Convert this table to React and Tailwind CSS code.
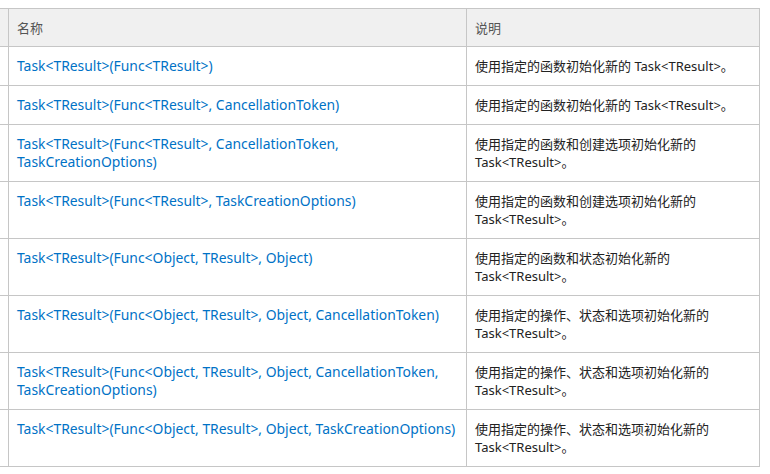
import React from "react";

const rows = [
  [["Task<TResult>(Func<TResult>)"], ["使用指定的函数初始化新的 Task<TResult>。"]],
  [["Task<TResult>(Func<TResult>, CancellationToken)"], ["使用指定的函数初始化新的 Task<TResult>。"]],
  [["Task<TResult>(Func<TResult>, CancellationToken,", "TaskCreationOptions)"], ["使用指定的函数和创建选项初始化新的", "Task<TResult>。"]],
  [["Task<TResult>(Func<TResult>, TaskCreationOptions)"], ["使用指定的函数和创建选项初始化新的", "Task<TResult>。"]],
  [["Task<TResult>(Func<Object, TResult>, Object)"], ["使用指定的函数和状态初始化新的", "Task<TResult>。"]],
  [["Task<TResult>(Func<Object, TResult>, Object, CancellationToken)"], ["使用指定的操作、状态和选项初始化新的", "Task<TResult>。"]],
  [["Task<TResult>(Func<Object, TResult>, Object, CancellationToken,", "TaskCreationOptions)"], ["使用指定的操作、状态和选项初始化新的", "Task<TResult>。"]],
  [["Task<TResult>(Func<Object, TResult>, Object, TaskCreationOptions)"], ["使用指定的操作、状态和选项初始化新的", "Task<TResult>。"]],
];

export default function App() {
  return (
    <div
      className="w-[770px] h-[474px] bg-white pt-[8px] overflow-hidden"
      style={{ fontFamily: '"Noto Sans", "Noto Sans CJK SC", sans-serif' }}
    >
      <div className="grid grid-cols-[9px_458px_293px] w-[760px] text-[13px] leading-[18px]">
        <div className="bg-[#f0f0f0] border-t border-b border-r border-[#c6c6c6] h-[39px]" />
        <div className="bg-[#f0f0f0] border-t border-b border-r border-[#c6c6c6] px-[8px] pt-[10px] text-[#555]">名称</div>
        <div className="bg-[#f0f0f0] border-t border-b border-r border-[#c6c6c6] px-[8px] pt-[10px] text-[#555]">说明</div>
        {rows.map((r, i) => (
          <React.Fragment key={i}>
            <div className="border-b border-r border-[#c6c6c6]" />
            <div className="border-b border-r border-[#c6c6c6] px-[8px] py-[10px] text-[#0072c6] text-[13.9px] whitespace-pre">
              {r[0].map((l, j) => (
                <div key={j}>{l}</div>
              ))}
            </div>
            <div className="border-b border-r border-[#c6c6c6] px-[8px] py-[10px] text-[#222]">
              {r[1].map((l, j) => (
                <div key={j}>{l}</div>
              ))}
            </div>
          </React.Fragment>
        ))}
      </div>
    </div>
  );
}
